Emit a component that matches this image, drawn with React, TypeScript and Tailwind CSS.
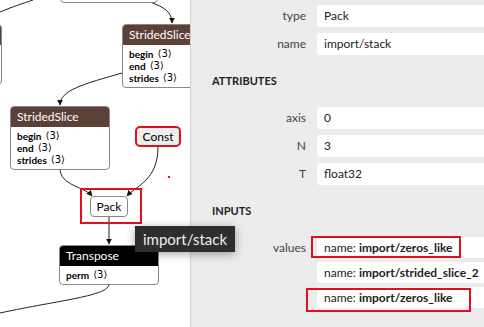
import React from 'react';

const font = { fontFamily: 'Lato, "Open Sans", sans-serif' };

function Attr({ k, v }: { k: string; v: string }) {
  return (
    <div className="flex h-3 items-center leading-none">
      <span className="font-bold">{k}</span>
      <span className="ml-1" style={{ fontFamily: '"DejaVu Sans", sans-serif' }}>⟨{v}⟩</span>
    </div>
  );
}

function OpNode({ title, dark, rows, className }: { title: string; dark?: boolean; rows: [string, string][]; className: string }) {
  return (
    <div className={`absolute w-[100px] overflow-hidden rounded-[4px] border border-[#888] bg-white text-[10px] text-black ${className}`}>
      <div className={`flex h-[20px] items-center px-[6px] text-[12px] text-white ${dark ? 'bg-black' : 'bg-[#5d4037]'}`}>{title}</div>
      <div className="flex flex-col px-[6px] pt-[3px] pb-[3px]">
        {rows.map(([k, v], i) => (
          <Attr key={i} k={k} v={v} />
        ))}
      </div>
    </div>
  );
}

function Field({ label, value }: { label: string; value: string }) {
  return (
    <div className="flex h-[22px] items-center">
      <div className="w-[115px] shrink-0 text-right text-[12px] text-[#444]">{label}</div>
      <div className="ml-[11px] flex h-full w-[200px] shrink-0 items-center rounded-[3px] bg-white pl-[7px] text-[12px] text-[#222]">{value}</div>
    </div>
  );
}

function Header({ children }: { children: string }) {
  return <div className="flex h-[52px] items-center pl-[21px] text-[11px] font-bold text-[#222]">{children}</div>;
}

function Graph() {
  return (
    <div className="relative h-full w-[190px] shrink-0 overflow-hidden bg-white">
      <svg className="absolute inset-0" width="190" height="327" viewBox="0 0 190 327" fill="none">
        <defs>
          <marker id="ah" viewBox="0 0 10 10" refX="9" refY="5" markerWidth="6" markerHeight="6" orient="auto">
            <path d="M0 0 L10 5 L0 10 z" fill="#111" />
          </marker>
        </defs>
        <g stroke="#222" strokeWidth="1">
          <path d="M0 12 C 12 7, 24 3, 33 0" />
          <path d="M150 2 C 164 7, 172 12, 172 23" markerEnd="url(#ah)" />
          <path d="M122 73 C 84 84, 60 90, 60 105" markerEnd="url(#ah)" />
          <path d="M60 168 C 60 186, 84 186, 92 196" markerEnd="url(#ah)" />
          <path d="M158 147 C 158 180, 136 186, 127 196" markerEnd="url(#ah)" />
          <path d="M109 217 L 109 244" markerEnd="url(#ah)" />
          <path d="M109 284 C 109 296, 60 300, 0 313" />
        </g>
      </svg>
      <div className="absolute left-[60px] top-[-20px] h-[23px] w-[98px] rounded-[4px] border border-[#888] bg-white" />
      <div className="absolute left-[-98px] top-[24px] h-[61px] w-[100px] overflow-hidden rounded-[4px] border border-[#888] bg-white">
        <div className="h-[20px] bg-[#5d4037]" />
      </div>
      <OpNode title="StridedSlice" rows={[["begin", "3"], ["end", "3"], ["strides", "3"]]} className="left-[122px] top-[24px]" />
      <OpNode title="StridedSlice" rows={[["begin", "3"], ["end", "3"], ["strides", "3"]]} className="left-[10px] top-[106px]" />
      <div className="absolute left-[135px] top-[126px] flex h-[21px] w-[46px] items-center justify-center rounded-[5px] border-2 border-[#e0101e] bg-[#eeeeee] text-[12px] text-black">Const</div>
      <div className="absolute left-[168px] top-[176px] h-[2px] w-[2px] bg-[#e0101e]" />
      <div className="absolute left-[90px] top-[196px] flex h-[21px] w-[38px] items-center justify-center rounded-[4px] border border-[#888] bg-white text-[12px] text-black">Pack</div>
      <OpNode title="Transpose" dark rows={[["perm", "3"]]} className="left-[59px] top-[245px]" />
    </div>
  );
}

export default function App() {
  return (
    <div className="relative flex h-[327px] w-[484px] overflow-hidden" style={font}>
      <Graph />
      <div className="flex-1 overflow-hidden border-l border-[#d0d0d0] bg-[#ececec] pt-[5px]">
        <div className="flex flex-col gap-[6px]">
          <Field label="type" value="Pack" />
          <Field label="name" value="import/stack" />
        </div>
        <Header>ATTRIBUTES</Header>
        <div className="flex flex-col gap-[6px]">
          <Field label="axis" value="0" />
          <Field label="N" value="3" />
          <Field label="T" value="float32" />
        </div>
        <Header>INPUTS</Header>
        <div className="flex">
          <div className="flex h-[21px] w-[115px] shrink-0 items-center justify-end text-[12px] text-[#444]">values</div>
          <div className="ml-[11px] flex shrink-0 flex-col gap-1">
            {['import/zeros_like', 'import/strided_slice_2', 'import/zeros_like'].map((n, i) => (
              <div key={i} className="flex h-[21px] w-[200px] items-center rounded-[3px] bg-white pl-[7px] text-[12px] text-[#222]">
                <span>name:&nbsp;</span>
                <span className="font-bold">{n}</span>
              </div>
            ))}
          </div>
        </div>
      </div>
      {/* annotations */}
      <div className="pointer-events-none absolute left-[80px] top-[188px] h-[36px] w-[62px] border-2 border-[#e0101e]" />
      <div className="pointer-events-none absolute left-[311px] top-[236px] h-[22px] w-[150px] border-2 border-[#e0101e]" />
      <div className="pointer-events-none absolute left-[306px] top-[288px] h-[24px] w-[165px] border-2 border-[#e0101e]" />
      <div className="absolute left-[135px] top-[226px] flex h-[26px] items-center bg-[#2e2e2e] px-[8px] text-[15px] text-[#eeeeee] shadow-[0_2px_10px_rgba(0,0,0,0.35)]">import/stack</div>
    </div>
  );
}
